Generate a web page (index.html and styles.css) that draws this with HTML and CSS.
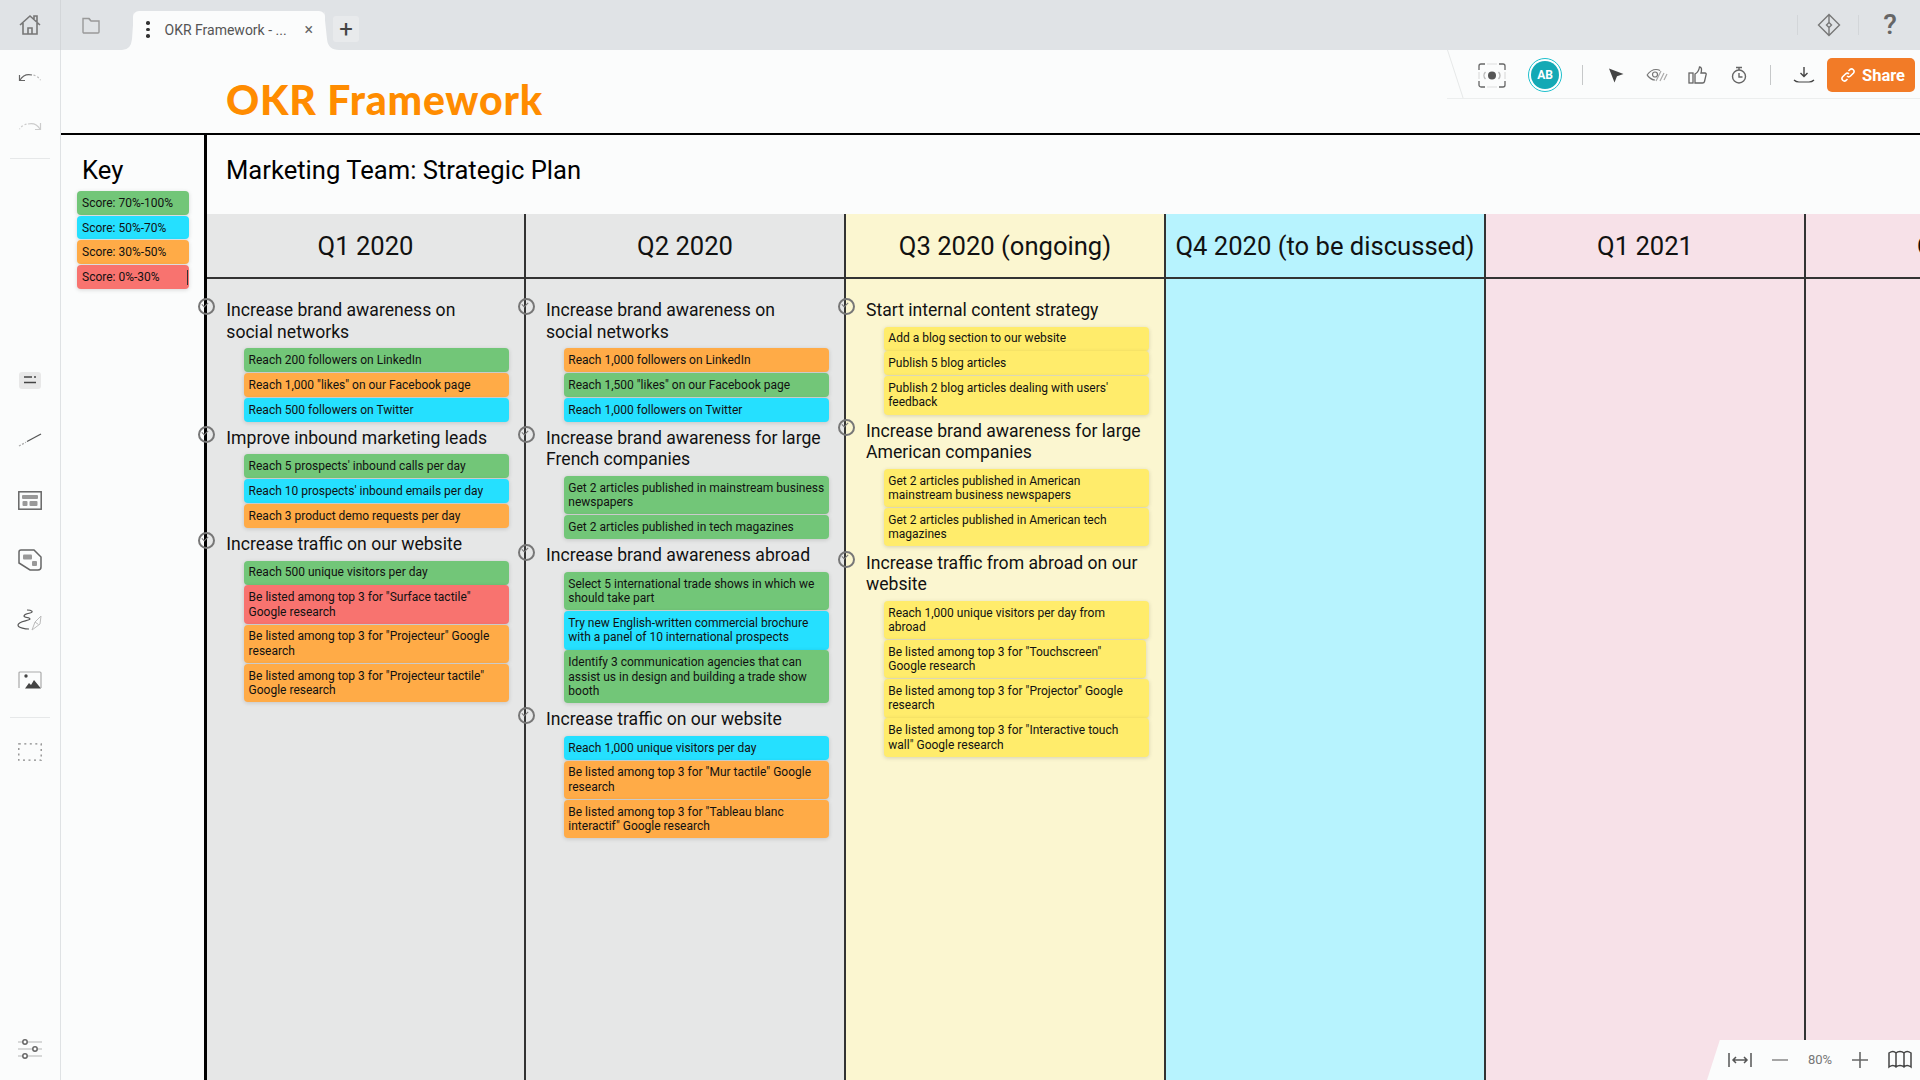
FILE: index.html
```html
<!DOCTYPE html>
<html lang="en">
<head>
<meta charset="utf-8">
<title>OKR Framework</title>
<link rel="stylesheet" href="styles.css">
</head>
<body>
<div class="app">
  <header class="topbar">
    <div class="home-cell">
      <svg width="24" height="24" viewBox="0 0 24 24" fill="none" stroke="#777" stroke-width="1.6"><path d="M2 12 12 3l10 9M5 10v11h14V10M10 21v-6h4v6M16 6V3h3v6"/></svg>
    </div>
    <div class="folder-cell">
      <svg width="20" height="18" viewBox="0 0 20 18" fill="none" stroke="#999" stroke-width="1.4"><path d="M2 15.5V2.5h6l2 2.500h8v11a1 1 0 0 1-1 1H3a1 1 0 0 1-1-1Z"/><path d="M8 2.500l1 1.500"/></svg>
    </div>
    <div class="tab">
      <span class="kebab"><i></i><i></i><i></i></span>
      <span class="tab-label">OKR Framework - ...</span>
      <span class="tab-close">×</span>
    </div>
    <div class="tab-add">+</div>
    <div class="top-right">
      <span class="top-sep"></span>
      <span class="top-icon">
        <svg width="24" height="24" viewBox="0 0 24 24" fill="none" stroke="#777" stroke-width="1.4"><path d="M12 1.500 22.500 12 12 22.500 1.500 12ZM12 9.500 14.500 12 12 14.500 9.500 12ZM12 2v7.500M12 14.500V22"/></svg>
      </span>
      <span class="top-sep"></span>
      <span class="help">?</span>
    </div>
  </header>

  <div class="workspace">
    <aside class="sidebar">
      <div class="side-btn short">
        <svg width="24" height="14" viewBox="0 0 24 14" fill="none" stroke="#666" stroke-width="1.200"><path d="M2 9c3-5 8-6 12-5"/><path d="M15.500 4.200c3 .6 5.500 2.400 7 5" stroke="#bbb" stroke-dasharray="2 2"/><path d="M1.500 4v5.500H7"/></svg>
      </div>
      <div class="side-btn short">
        <svg width="24" height="14" viewBox="0 0 24 14" fill="none" stroke="#ccc" stroke-width="1.200"><path d="M22 9C19 4 14 3 10 4"/><path d="M8.500 4.200c-3 .6-5.500 2.400-7 5" stroke-dasharray="2 2"/><path d="M22.500 3v6.500H17"/></svg>
      </div>
      <div class="side-divider first"></div>

      <div class="tools">
        <div class="side-btn">
          <span class="text-tool">
            <svg width="14" height="8" viewBox="0 0 14 8" fill="none" stroke="#444" stroke-width="1.400"><path d="M1 1h8M11 1h2M1 6.500h12"/></svg>
          </span>
        </div>
        <div class="side-btn">
          <svg width="24" height="14" viewBox="0 0 24 14" fill="none" stroke="#555" stroke-width="1.300"><path d="M9 8.500 23 1"/><path d="M1 13 8 9.200" stroke="#aaa" stroke-dasharray="2 1.500"/></svg>
        </div>
        <div class="side-btn">
          <svg width="24" height="19" viewBox="0 0 24 19" fill="none"><rect x=".8" y=".8" width="22.400" height="17.400" stroke="#666" stroke-width="1.500"/><rect x="4" y="4" width="16" height="4" rx="1" fill="#999"/><rect x="4.500" y="10" width="5" height="5" rx="1" fill="#999"/><rect x="11.500" y="10" width="8" height="5" rx="1" fill="#999"/></svg>
        </div>
        <div class="side-btn">
          <svg width="24" height="22" viewBox="0 0 24 22" fill="none"><path d="M3 1h13l7 7v10a3 3 0 0 1-3 3h-8L1 14V3a2 2 0 0 1 2-2Z" stroke="#666" stroke-width="1.500"/><rect x="5" y="5.500" width="9" height="5" rx="1" fill="#999"/><rect x="14" y="12" width="5" height="5" rx="1" fill="#999"/></svg>
        </div>
        <div class="side-btn">
          <svg width="26" height="22" viewBox="0 0 26 22" fill="none"><path d="M10 1c5 0 7 2 3 3-4 1-6 1-6 3 0 2 6 1 6 3-1 2-12 2-12 6 0 3 8 4 11 4" stroke="#555" stroke-width="1.200"/><path d="M15 21l3-8 6-6-1 8-8 6ZM18 13l3.500 2.500" stroke="#bbb"/></svg>
        </div>
        <div class="side-btn">
          <svg width="24" height="18" viewBox="0 0 24 18" fill="none"><path d="M1 17V2a1 1 0 0 1 1-1h20a1 1 0 0 1 1 1v15" stroke="#aaa" stroke-width="1.200"/><circle cx="8" cy="5" r="1.700" fill="#444"/><path d="M7 17.500l4-5.500 2 2 3-5 7 8.500Z" fill="#444"/></svg>
        </div>
      </div>
      <div class="side-divider second"></div>
      <div class="side-btn">
        <svg width="24" height="18" viewBox="0 0 24 18" fill="none"><rect x=".8" y=".8" width="22.400" height="16.400" stroke="#888" stroke-width="1.300" stroke-dasharray="2 3.500"/></svg>
      </div>
      <div class="side-settings">
        <svg width="24" height="20" viewBox="0 0 24 20" fill="none"><path d="M0 3h24M0 10h24M0 17h24" stroke="#ccc" stroke-width="1.400"/><circle cx="7" cy="3" r="2.200" fill="#fff" stroke="#666" stroke-width="1.500"/><circle cx="17" cy="10" r="2.200" fill="#fff" stroke="#666" stroke-width="1.500"/><circle cx="7" cy="17" r="2.200" fill="#fff" stroke="#666" stroke-width="1.500"/></svg>
      </div>
    </aside>

    <main class="canvas">
      <div class="title-bar"><h1 class="title">OKR Framework</h1></div>
      <div class="sheet">
        <section class="key">
          <h2 class="panel-title key-title">Key</h2>
          <div class="key-list">
            <div class="key-item green">Score: 70%-100%</div>
            <div class="key-item cyan">Score: 50%-70%</div>
            <div class="key-item orange">Score: 30%-50%</div>
            <div class="key-item red caret">Score: 0%-30%</div>
          </div>
        </section>
        <section class="plan">
          <h2 class="panel-title plan-title">Marketing Team: Strategic Plan</h2>
          <div class="board">
            <div class="col col-first grey">
              <div class="col-head">Q1 2020</div>
              <div class="col-body">
                <div class="group">
                  <h3 class="goal">Increase brand awareness on social networks</h3>
                  <div class="card green">Reach 200 followers on LinkedIn</div>
                  <div class="card orange">Reach 1,000 "likes" on our Facebook page</div>
                  <div class="card cyan">Reach 500 followers on Twitter</div>
                </div>
                <div class="group">
                  <h3 class="goal">Improve inbound marketing leads</h3>
                  <div class="card green">Reach 5 prospects' inbound calls per day</div>
                  <div class="card cyan">Reach 10 prospects' inbound emails per day</div>
                  <div class="card orange">Reach 3 product demo requests per day</div>
                </div>
                <div class="group">
                  <h3 class="goal">Increase traffic on our website</h3>
                  <div class="card green">Reach 500 unique visitors per day</div>
                  <div class="card red">Be listed among top 3 for "Surface tactile" Google research</div>
                  <div class="card orange">Be listed among top 3 for "Projecteur" Google research</div>
                  <div class="card orange">Be listed among top 3 for "Projecteur tactile" Google research</div>
                </div>
              </div>
            </div>
            <div class="col grey">
              <div class="col-head">Q2 2020</div>
              <div class="col-body">
                <div class="group">
                  <h3 class="goal">Increase brand awareness on social networks</h3>
                  <div class="card orange">Reach 1,000 followers on LinkedIn</div>
                  <div class="card green">Reach 1,500 "likes" on our Facebook page</div>
                  <div class="card cyan">Reach 1,000 followers on Twitter</div>
                </div>
                <div class="group">
                  <h3 class="goal">Increase brand awareness for large French companies</h3>
                  <div class="card green">Get 2 articles published in mainstream business newspapers</div>
                  <div class="card green">Get 2 articles published in tech magazines</div>
                </div>
                <div class="group">
                  <h3 class="goal">Increase brand awareness abroad</h3>
                  <div class="card green">Select 5 international trade shows in which we should take part</div>
                  <div class="card cyan">Try new English-written commercial brochure with a panel of 10 international prospects</div>
                  <div class="card green">Identify 3 communication agencies that can assist us in design and building a trade show booth</div>
                </div>
                <div class="group">
                  <h3 class="goal">Increase traffic on our website</h3>
                  <div class="card cyan">Reach 1,000 unique visitors per day</div>
                  <div class="card orange">Be listed among top 3 for "Mur tactile" Google research</div>
                  <div class="card orange">Be listed among top 3 for "Tableau blanc interactif" Google research</div>
                </div>
              </div>
            </div>
            <div class="col cream">
              <div class="col-head">Q3 2020 (ongoing)</div>
              <div class="col-body">
                <div class="group">
                  <h3 class="goal">Start internal content strategy</h3>
                  <div class="card yellow">Add a blog section to our website</div>
                  <div class="card yellow">Publish 5 blog articles</div>
                  <div class="card yellow">Publish 2 blog articles dealing with users' feedback</div>
                </div>
                <div class="group">
                  <h3 class="goal">Increase brand awareness for large American companies</h3>
                  <div class="card yellow">Get 2 articles published in American mainstream business newspapers</div>
                  <div class="card yellow">Get 2 articles published in American tech magazines</div>
                </div>
                <div class="group">
                  <h3 class="goal">Increase traffic from abroad on our website</h3>
                  <div class="card yellow">Reach 1,000 unique visitors per day from abroad</div>
                  <div class="card yellow narrow">Be listed among top 3 for "Touchscreen" Google research</div>
                  <div class="card yellow">Be listed among top 3 for "Projector" Google research</div>
                  <div class="card yellow">Be listed among top 3 for "Interactive touch wall" Google research</div>
                </div>
              </div>
            </div>
            <div class="col sky"><div class="col-head">Q4 2020 (to be discussed)</div></div>
            <div class="col pink"><div class="col-head">Q1 2021</div></div>
            <div class="col pink"><div class="col-head">Q2 2021</div></div>
          </div>
        </section>
      </div>
    </main>
  </div>

  <div class="toolbar">
    <span class="tb-focus">
      <svg width="28" height="25" viewBox="0 0 28 25" fill="none"><path d="M1 7V3a2 2 0 0 1 2-2h4M21 1h4a2 2 0 0 1 2 2v4M27 18v4a2 2 0 0 1-2 2h-4M7 24H3a2 2 0 0 1-2-2v-4" stroke="#666" stroke-width="1.300"/><path d="M1 9v7M27 9v7M9 1h10M9 24h10" stroke="#ddd" stroke-width="1.200"/><circle cx="14" cy="12.500" r="4" fill="#555"/><path d="M7.500 9c-2 2-2 5 0 7M20.500 9c2 2 2 5 0 7" stroke="#bbb" stroke-width="1.400"/></svg>
    </span>
    <span class="avatar"><span class="avatar-in">AB</span></span>
    <span class="tb-sep"></span>
    <span class="tb-group">
      <span class="tb-btn">
        <svg width="16" height="16" viewBox="0 0 16 16"><path d="M1 1.500 15.500 7 9 9.300 6.500 15.500Z" fill="#444"/></svg>
      </span>
      <span class="tb-btn">
        <svg width="22" height="14" viewBox="0 0 22 14" fill="none" stroke="#777" stroke-width="1.200"><path d="M1 7c3-4 6-5.500 9-5.500 2 0 3 .4 4 1M1 7c2.500 3 5 5 8 5"/><circle cx="9" cy="6.500" r="2.500"/><path d="M10 13 15 3M14 13l4-8M18 12l3-6" stroke="#aaa"/></svg>
      </span>
      <span class="tb-btn">
        <svg width="19" height="18" viewBox="0 0 19 18" fill="none" stroke="#666" stroke-width="1.300"><rect x="1" y="7" width="4" height="10"/><path d="M7 8c2-1 4-4 4.500-7 2 0 2.500 2 1.500 6h4c1 0 1.500 1 1 2l-1.500 6.500c-.2 1-1 1.500-2 1.500H7Z"/></svg>
      </span>
      <span class="tb-btn">
        <svg width="16" height="18" viewBox="0 0 16 18" fill="none" stroke="#666" stroke-width="1.400"><circle cx="8" cy="10.500" r="6.500"/><path d="M5 1.500h6M8 2v2M8 7v4h3.500"/></svg>
      </span>
    </span>
    <span class="tb-sep second"></span>
    <span class="tb-download">
      <svg width="22" height="18" viewBox="0 0 22 18" fill="none" stroke="#444" stroke-width="1.400"><path d="M11 1v9M7.500 7l3.500 3.500L14.500 7"/><path d="M1 14c2 2 3 2 5 2h10c2 0 3 0 5-2" stroke-width="1.200"/></svg>
    </span>
    <span class="share">
      <svg width="14" height="14" viewBox="0 0 14 14" fill="none" stroke="#fff" stroke-width="1.600"><path d="M6 8a2.500 2.500 0 0 0 3.500 0l3-3A2.500 2.500 0 0 0 9 1.500L7.500 3"/><path d="M8 6a2.500 2.500 0 0 0-3.500 0l-3 3A2.500 2.500 0 0 0 5 12.500L6.500 11"/></svg>
      Share
    </span>
  </div>

  <div class="zoombar">
    <span class="zb-btn">
      <svg width="24" height="16" viewBox="0 0 24 16" fill="none" stroke="#555" stroke-width="1.500"><path d="M1 1v14M23 1v14M5 8h14M8 5 5 8l3 3M16 5l3 3-3 3"/></svg>
    </span>
    <span class="zb-btn">
      <svg width="16" height="2" viewBox="0 0 16 2"><path d="M0 1h16" stroke="#888" stroke-width="1.600"/></svg>
    </span>
    <span class="zb-btn zb-pct">80%</span>
    <span class="zb-btn">
      <svg width="16" height="16" viewBox="0 0 16 16"><path d="M0 8h16M8 0v16" stroke="#666" stroke-width="1.600"/></svg>
    </span>
    <span class="zb-btn">
      <svg width="24" height="19" viewBox="0 0 24 19" fill="none" stroke="#444" stroke-width="1.500"><path d="M1 3c3-2 5-2 7 0 2-2 6-2 8 0 2-2 4-2 7 0v14c-3-2-5-2-7 0-2-2-6-2-8 0-2-2-4-2-7 0ZM8 3v14M16 3v14"/></svg>
    </span>
  </div>
</div>
</body>
</html>
```

FILE: styles.css
```css
* { box-sizing: border-box; }
html, body { margin: 0; height: 100%; overflow: hidden; }
body { font-family: Roboto, "Liberation Sans", sans-serif; background: #fbfcfc; color: #111; }
h1, h2, h3 { margin: 0; font-weight: 400; }

.app { position: relative; width: 1920px; height: 1080px; display: flex; flex-direction: column; overflow: hidden; }

/* tab bar */
.topbar { flex: none; height: 50px; background: #e0e3e6; display: flex; align-items: flex-start; }
.home-cell { flex: none; width: 61px; height: 50px; padding-right: 1px; border-right: 1px solid #d3d6d9; display: flex; align-items: center; justify-content: center; }
.folder-cell { flex: none; width: 60px; height: 50px; display: flex; align-items: center; justify-content: center; }
.tab { position: relative; flex: none; width: 192px; height: 39px; margin: 11px 0 0 12px; padding-bottom: 2px; background: #fbfcfc; border-radius: 6px 6px 0 0; display: flex; align-items: center; }
.tab::before, .tab::after { content: ""; position: absolute; bottom: 0; height: 39px; background: #fbfcfc; }
.tab::before { left: -11px; width: 12px; clip-path: path("M12 0 L10 28 Q9 39 0 39 L12 39 Z"); }
.tab::after { right: -14px; width: 15px; clip-path: path("M0 0 L3 28 Q4 39 15 39 L0 39 Z"); }
.kebab { flex: none; width: 4px; margin-left: 13px; display: flex; flex-direction: column; gap: 3px; }
.kebab i { display: block; width: 3.500px; height: 3.500px; border-radius: 50%; background: #333; }
.tab-label { margin-left: 14.500px; font-size: 14px; color: #555; white-space: nowrap; }
.tab-close { margin-left: auto; margin-right: 12px; font-size: 16px; color: #666; line-height: 1; }
.tab-add { flex: none; width: 26px; height: 26px; margin: 16px 0 0 8px; background: #e8eaec; border-radius: 3px; font-size: 24px; line-height: 26px; text-align: center; color: #444; }
.top-right { margin-left: auto; height: 50px; display: flex; align-items: center; }
.top-sep { width: 1px; height: 20px; background: #d3d6d9; }
.top-icon { width: 60px; padding-left: 1px; display: flex; justify-content: center; }
.help { width: 61px; padding-left: 1px; text-align: center; font-size: 28px; font-weight: 500; color: #666; line-height: 1; }

/* left rail */
.workspace { flex: 1; min-height: 0; display: flex; }
.sidebar { flex: none; width: 61px; border-right: 1px solid #dfe2e4; padding-top: 3px; display: flex; flex-direction: column; align-items: stretch; }
.side-btn { height: 60px; display: flex; align-items: center; justify-content: center; }
.side-btn.short { height: 49px; }
.side-divider { height: 1px; margin-left: 10px; margin-right: 10px; background: #e6e8e9; }
.side-divider.first { margin-top: 7px; }
.side-divider.second { margin-top: 7px; margin-bottom: 4px; }
.tools { margin-top: 191px; }
.text-tool { width: 22px; height: 17px; background: #e8e8e8; border-radius: 3px; display: flex; align-items: center; justify-content: center; }
.side-settings { margin-top: auto; height: 20px; margin-bottom: 21px; display: flex; justify-content: center; }

/* canvas */
.canvas { flex: 1; min-width: 0; overflow: hidden; display: flex; flex-direction: column; }
.title-bar { flex: none; height: 85px; border-bottom: 2px solid #000; padding: 26px 0 0 165px; }
.title { font-family: Lato, Roboto, sans-serif; font-weight: 900; font-size: 41px; line-height: 48px; color: #ff8c00; letter-spacing: .8px; white-space: nowrap; }
.sheet { flex: 1; min-height: 0; display: flex; }
.panel-title { font-size: 25.600px; line-height: 30px; color: #000; }
.key { flex: none; width: 143px; padding: 20px 0 0 16px; }
.key-title { padding-left: 5px; margin-bottom: 6px; }
.key-list { width: 112px; display: flex; flex-direction: column; gap: 1px; }
.key-item { position: relative; height: 23.700px; padding: 1px 0 0 5px; line-height: 23.700px; font-size: 12px; border-radius: 4px; box-shadow: 0 1px 4px rgba(0, 0, 0, .15); }
.caret::after { content: ""; position: absolute; right: 1px; top: 5px; width: 1px; height: 15px; background: #333; }
.plan { flex: 1; min-width: 0; border-left: 3px solid #000; display: flex; flex-direction: column; }
.plan-title { flex: none; height: 79px; padding: 20px 0 0 19px; }
.board { flex: 1; min-height: 0; display: flex; }

.col { flex: none; width: 320px; border-left: 2px solid #333; }
.col-first { width: 317px; border-left: 0; }
.col-head { height: 63px; box-sizing: content-box; border-bottom: 2px solid #333; font-size: 25.600px; line-height: 64px; text-align: center; white-space: nowrap; color: #111; }
.col-body { padding: 20.200px 0 0 1px; display: flex; flex-direction: column; gap: 5.300px; }
.col-first .col-body { padding-left: .3px; }
.grey { background: #e6e7e7; }
.cream { background: #fbf6d0; }
.sky { background: #b7f3fe; }
.pink { background: #f7e1e8; }

.group { display: flex; flex-direction: column; gap: .8px; padding-left: 36.500px; }
.goal { position: relative; margin: 0 0 4.200px -17.500px; padding-top: .8px; width: 278px; font-size: 17.600px; line-height: 21.600px; color: #111; }
.goal::before { content: ""; position: absolute; left: -28.500px; top: -1px; width: 13px; height: 13px; border: 2px solid #777; border-radius: 50%; }
.goal::after { content: ""; position: absolute; left: -24.500px; top: 2.500px; width: 5px; height: 3px; border-left: 1.500px solid #777; border-bottom: 1.500px solid #777; transform: rotate(-45deg); }
.card { width: 265.700px; padding: 4.800px; font-size: 12px; line-height: 14.400px; border-radius: 4px; box-shadow: 0 1px 4px rgba(0, 0, 0, .15); }
.card.narrow { width: 262px; }
.green { background: #72c678; }
.cyan { background: #25e0ff; }
.orange { background: #ffab47; }
.red { background: #f8736f; }
.yellow { background: #ffec6b; }

/* floating toolbar */
.toolbar { position: absolute; top: 50px; right: 0; width: 473px; height: 49px; padding: 8px 5px 0 25px; background: #fbfcfc; border-bottom: 1px solid #eceeee; display: flex; align-items: flex-start; }
.toolbar::before { content: ""; position: absolute; left: 0; top: 0; width: 1px; height: 48px; background: #e6e8e8; transform: skewX(18deg); transform-origin: 0 0; }
.toolbar > * { flex: none; }
.tb-focus { width: 40px; height: 34px; display: flex; align-items: center; justify-content: center; }
.avatar { width: 34px; height: 34px; margin-left: 16px; border: 1px solid #1fc0cd; border-radius: 50%; padding: 2px; background: #fff; }
.avatar-in { display: block; width: 28px; height: 28px; border-radius: 50%; background: #14a9b5; color: #fff; font-size: 12px; font-weight: 700; line-height: 28px; text-align: center; }
.tb-sep { width: 1px; height: 20px; margin: 7px 0 0 20px; background: #c6c8c9; }
.tb-sep.second { margin-left: 11px; }
.tb-group { margin-left: 12px; display: flex; }
.tb-btn { width: 41px; height: 34px; display: flex; align-items: center; justify-content: center; }
.tb-download { width: 34px; height: 34px; margin-left: 16px; display: flex; align-items: center; justify-content: center; }
.share { width: 88px; height: 34px; margin-left: 6px; padding-left: 4px; border-radius: 5px; background: #f27b27; color: #fff; font-size: 16.500px; font-weight: 700; display: flex; align-items: center; justify-content: center; gap: 7px; }

/* zoom control */
.zoombar { position: absolute; right: 0; bottom: 0; width: 213px; height: 40.500px; padding-left: 13px; background: #fbfcfc; clip-path: polygon(13px 0, 100% 0, 100% 100%, 0 100%); display: flex; align-items: center; }
.zb-btn { flex: none; width: 40px; display: flex; justify-content: center; }
.zb-pct { font-size: 13px; color: #777; }
```
